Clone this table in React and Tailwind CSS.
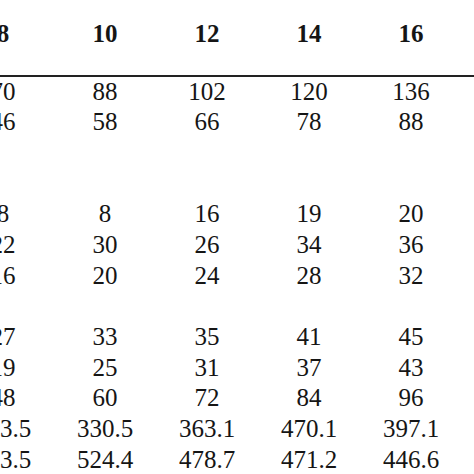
import React from 'react';

const headers = ['8', '10', '12', '14', '16'];

const rows = [
  ['70', '88', '102', '120', '136'],
  ['46', '58', '66', '78', '88'],
  ['', '', '', '', ''],
  ['', '', '', '', ''],
  ['8', '8', '16', '19', '20'],
  ['22', '30', '26', '34', '36'],
  ['16', '20', '24', '28', '32'],
  ['', '', '', '', ''],
  ['27', '33', '35', '41', '45'],
  ['19', '25', '31', '37', '43'],
  ['48', '60', '72', '84', '96'],
  ['293.5', '330.5', '363.1', '470.1', '397.1'],
  ['423.5', '524.4', '478.7', '471.2', '446.6'],
];

const App = () => {
  return (
    <div
      className="w-[474px] h-[474px] overflow-hidden bg-white text-[#151515]"
      style={{ fontFamily: '"Liberation Serif", "Times New Roman", serif' }}
    >
      <div className="ml-[-48px] w-[612px]">
        <div className="h-[75px] pt-[19px] grid grid-cols-6">
          {headers.map((h) => (
            <div key={h} className="text-center text-[25px] leading-[30px] font-bold">
              {h}
            </div>
          ))}
        </div>
        <div className="h-[1.5px] bg-[#222]"></div>
        {rows.map((row, i) => (
          <div key={i} className="grid grid-cols-6 h-[30.7px]">
            {row.map((cell, j) => (
              <div key={j} className="text-center text-[25px] leading-[30.7px]">
                {cell}
              </div>
            ))}
          </div>
        ))}
      </div>
    </div>
  );
};

export default App;
